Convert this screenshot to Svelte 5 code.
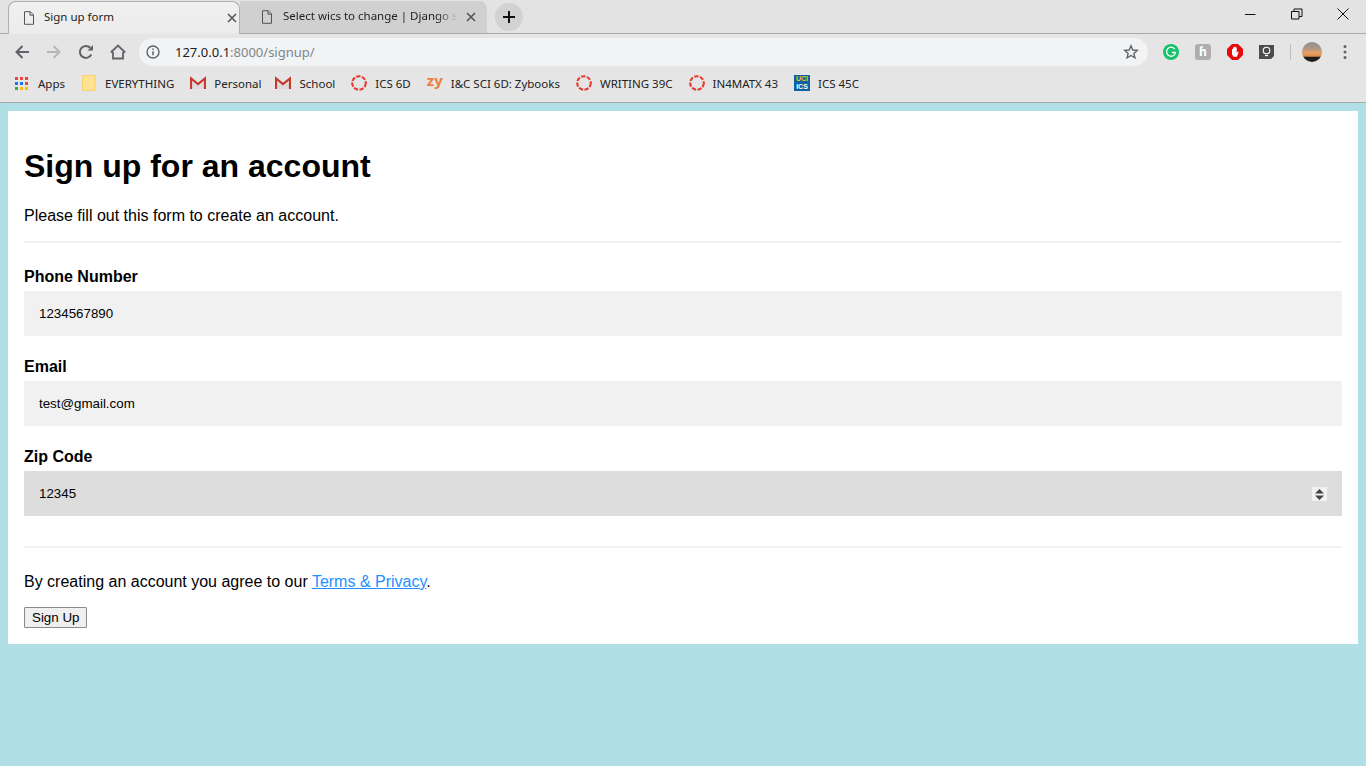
<script lang="ts">
const bookmarks = [
	{ icon: "apps", label: "Apps" },
	{ icon: "folder", label: "EVERYTHING" },
	{ icon: "gmail", label: "Personal" },
	{ icon: "gmail", label: "School" },
	{ icon: "ring", label: "ICS 6D" },
	{ icon: "zy", label: "I&C SCI 6D: Zybooks" },
	{ icon: "ring", label: "WRITING 39C" },
	{ icon: "ring", label: "IN4MATX 43" },
	{ icon: "uci", label: "ICS 45C" },
];
const appColors = ["#e8453c", "#e8453c", "#e8453c", "#1a73e8", "#1a73e8", "#e8453c", "#34a853", "#fbbc05", "#fbbc05"];
const fields = [
	{ label: "Phone Number", value: "1234567890" },
	{ label: "Email", value: "test@gmail.com" },
];
</script>

<div class="chrome">
	<div class="tabstrip">
		<div class="tab active">
			<svg class="page" viewBox="0 0 12 14" width="12" height="14"><path d="M1.500.700h5.800l3.200 3.200v9.400h-9zM7 .900v3.300h3.400" fill="none" stroke="#555" stroke-width="1"/></svg>
			<span class="tab-title">Sign up form</span>
			<svg class="tab-x" viewBox="0 0 10 10" width="10" height="10"><path d="M1 1l8 8M9 1l-8 8" stroke="#555" stroke-width="1.600"/></svg>
		</div>
		<div class="tab inactive">
			<svg class="page" viewBox="0 0 12 14" width="12" height="14"><path d="M1.500.700h5.800l3.200 3.200v9.400h-9zM7 .900v3.300h3.400" fill="none" stroke="#555" stroke-width="1"/></svg>
			<span class="tab-title fade">Select wics to change | Django site admin</span>
			<svg class="tab-x" viewBox="0 0 10 10" width="10" height="10"><path d="M1 1l8 8M9 1l-8 8" stroke="#555" stroke-width="1.600"/></svg>
		</div>
		<div class="newtab">
			<svg viewBox="0 0 12 12" width="12" height="12"><path d="M6 0v12M0 6h12" stroke="#111" stroke-width="2"/></svg>
		</div>
		<div class="window-controls">
			<svg viewBox="0 0 12 12" width="12" height="12"><path d="M0 6.500h10.500" stroke="#111" stroke-width="1"/></svg>
			<svg viewBox="0 0 12 12" width="12" height="12"><path d="M.500 3.500h7.500v7.500H.500zM3 3.500V1h8v7.500H8" fill="none" stroke="#111" stroke-width="1"/></svg>
			<svg viewBox="0 0 12 12" width="12" height="12"><path d="M.500.500l11 11M11.500.500l-11 11" stroke="#111" stroke-width="1"/></svg>
		</div>
	</div>

	<div class="toolbar">
		<div class="nav">
			<svg viewBox="0 0 16 16" width="16" height="16"><path d="M15 8H2.500M8.500 2L2.500 8l6 6" fill="none" stroke="#5f6368" stroke-width="2"/></svg>
			<svg viewBox="0 0 16 16" width="16" height="16"><path d="M1 8h12.500M7.500 2l6 6-6 6" fill="none" stroke="#b4b6b8" stroke-width="2"/></svg>
			<svg viewBox="0 0 16 16" width="16" height="16"><path d="M13.300 10.500A6 6 0 1 1 12.300 3.800" fill="none" stroke="#5f6368" stroke-width="2"/><path d="M9.500 6.500h5.500V1z" fill="#5f6368"/></svg>
			<svg viewBox="0 0 16 16" width="16" height="16"><path d="M3 8v6.500h10V8M.800 8.500L8 1.500l7.200 7" fill="none" stroke="#5f6368" stroke-width="1.800"/></svg>
		</div>
		<div class="omnibox">
			<svg class="info" viewBox="0 0 14 14" width="14" height="14"><circle cx="7" cy="7" r="6" fill="none" stroke="#5f6368" stroke-width="1.400"/><path d="M7 6.200v4M7 3.500v1.400" stroke="#5f6368" stroke-width="1.500"/></svg>
			<span class="url"><span class="host">127.0.0.1</span>:8000/signup/</span>
			<svg class="star" viewBox="0 0 16 16" width="16" height="16"><path d="M8 1.800l1.800 4.200 4.500.4-3.400 3 1 4.400L8 11.500l-3.900 2.300 1-4.400-3.400-3 4.500-.4z" fill="none" stroke="#5f6368" stroke-width="1.400"/></svg>
		</div>
		<div class="extensions">
			<svg viewBox="0 0 16 16" width="16" height="16"><circle cx="8" cy="8" r="8" fill="#15c26b"/><path d="M11.800 5.200A4.500 4.500 0 1 0 12.500 8.500H8.800" fill="none" stroke="#fff" stroke-width="1.300"/></svg>
			<div class="ext-hn">ɦ</div>
			<svg viewBox="0 0 16 16" width="16" height="16"><path d="M5 0h6l5 5v6l-5 5H5l-5-5V5z" fill="#e60a0a"/><path d="M5 8V5h1v2-3.500h1.200V7 2.800h1.300V7 3.500h1.200V9l1-1.500 1 .6L10 12.800H6.500L5 10.500z" fill="#fff"/></svg>
			<svg viewBox="0 0 16 16" width="16" height="16"><path d="M0 1h15v11l-3 3H0z" fill="#4c4c4c"/><circle cx="7.500" cy="6.500" r="3.300" fill="none" stroke="#fff" stroke-width="1.100"/><path d="M6 11.500h3" stroke="#fff" stroke-width="1.300"/></svg>
			<div class="divider"></div>
			<div class="avatar"></div>
			<svg class="kebab" viewBox="0 0 4 16" width="4" height="16"><circle cx="2" cy="2.500" r="1.500" fill="#5f6368"/><circle cx="2" cy="8" r="1.500" fill="#5f6368"/><circle cx="2" cy="13.500" r="1.500" fill="#5f6368"/></svg>
		</div>
	</div>

	<div class="bookmarks">
		{#each bookmarks as mark}
			<div class="mark">
				{#if mark.icon === "apps"}
					<div class="apps">
						{#each appColors as color}<i style="background: {color}"></i>{/each}
					</div>
				{:else if mark.icon === "folder"}
					<svg viewBox="0 0 14 16" width="14" height="16"><path d="M.500.500h12.500v15H.500z" fill="#fde293" stroke="#f6d26b"/></svg>
				{:else if mark.icon === "gmail"}
					<svg viewBox="0 0 16 14" width="16" height="14"><path d="M1 3l7 5.500L15 3v10H1z" fill="#dcdcdc"/><path d="M1 13V2.500L8 8l7-5.500V13" fill="none" stroke="#c8382b" stroke-width="2.200"/></svg>
				{:else if mark.icon === "ring"}
					<svg viewBox="0 0 16 16" width="16" height="16"><circle cx="8" cy="8" r="6.800" fill="none" stroke="#e8392e" stroke-width="2.100" stroke-dasharray="4.300 1.500"/></svg>
				{:else if mark.icon === "zy"}
					<span class="zy">zy</span>
				{:else}
					<div class="uci"><span class="uci-top">UCI</span><span>ICS</span></div>
				{/if}
				<span>{mark.label}</span>
			</div>
		{/each}
	</div>
</div>

<main class="card">
	<h1>Sign up for an account</h1>
	<p class="intro">Please fill out this form to create an account.</p>
	<hr />
	{#each fields as field}
		<label class="field">
			<b>{field.label}</b>
			<input type="text" value={field.value} />
		</label>
	{/each}
	<label class="field">
		<b>Zip Code</b>
		<div class="zip">
			<input class="focused" type="text" value="12345" />
			<span class="spinner">
				<svg viewBox="0 0 9 11" width="9" height="11"><path d="M4.500 0L9 4.500H0zM0 6.500h9L4.500 11z" fill="#444"/></svg>
			</span>
		</div>
	</label>
	<hr class="lower" />
	<p class="terms">By creating an account you agree to our <a href="#terms">Terms &amp; Privacy</a>.</p>
	<button type="button">Sign Up</button>
</main>

<style>
	:global(body) {
		background: #b0dfe5;
		font-family: "Liberation Sans", Arial, sans-serif;
	}

	.chrome {
		display: flex;
		flex-direction: column;
		height: 102px;
		border-bottom: 1px solid #a9a9a9;
		background: #e5e5e5;
		font-family: "Noto Sans", "Open Sans", sans-serif;
		font-size: 11.5px;
		color: #222;
	}

	.tabstrip {
		display: flex;
		align-items: flex-end;
		height: 34px;
		padding-left: 8px;
		box-sizing: border-box;
		border-bottom: 1px solid #a9a9a9;
		background: #e3e3e3;
	}

	.tab {
		display: flex;
		align-items: center;
		height: 33px;
		box-sizing: border-box;
		border-radius: 8px 8px 0 0;
		margin-bottom: -1px;
	}

	.tab.active {
		width: 232px;
		padding: 0 2px 1px 14px;
		border: 1px solid #b0b0b0;
		border-bottom: 0;
		background: linear-gradient(#f1f1f1, #ebebeb);
	}

	.tab.inactive {
		width: 247px;
		padding: 0 11px 1px 21px;
		margin-bottom: 0;
		height: 32px;
		background: #d0d0d0;
		border-radius: 0 8px 0 0;
	}

	.page {
		flex: none;
		margin-right: 9px;
	}

	.inactive .page {
		margin-right: 10px;
	}

	.tab-title {
		flex: 1;
		min-width: 0;
		padding-bottom: 2px;
		overflow: hidden;
		white-space: nowrap;
	}

	.fade {
		-webkit-mask-image: linear-gradient(90deg, #000 88%, transparent);
		mask-image: linear-gradient(90deg, #000 88%, transparent);
	}

	.tab-x {
		flex: none;
		margin-left: 8px;
	}

	.newtab {
		display: flex;
		align-items: center;
		justify-content: center;
		width: 28px;
		height: 28px;
		margin: 0 0 2px 8px;
		border-radius: 50%;
		background: #d2d2d2;
	}

	.window-controls {
		display: flex;
		gap: 34px;
		margin-left: auto;
		align-self: flex-start;
		padding: 8px 17px 0 0;
	}

	.toolbar {
		display: flex;
		align-items: center;
		height: 34px;
		box-sizing: border-box;
		padding: 2px 0 0 14px;
	}

	.nav {
		display: flex;
		gap: 16px;
	}

	.omnibox {
		display: flex;
		align-items: center;
		width: 1009px;
		height: 28px;
		box-sizing: border-box;
		margin-left: 13px;
		padding: 0 9px 0 7px;
		border-radius: 14px;
		background: #f1f3f4;
	}

	.url {
		flex: 1;
		margin-left: 15px;
		font-size: 13px;
		color: #80868b;
	}

	.host {
		color: #202124;
	}

	.extensions {
		display: flex;
		align-items: center;
		margin-left: 15px;
		gap: 16px;
	}

	.ext-hn {
		display: flex;
		align-items: center;
		justify-content: center;
		width: 16px;
		height: 16px;
		border-radius: 3px;
		background: #aeaeae;
		color: #fff;
		font-size: 12px;
		font-weight: 700;
		line-height: 1;
	}

	.divider {
		width: 1px;
		height: 16px;
		margin: 0 -5px 0 -1px;
		background: #bcbcbc;
	}

	.avatar {
		width: 20px;
		height: 20px;
		border-radius: 50%;
		background: linear-gradient(#8f8f8f 0, #a8958a 30%, #e8a25f 55%, #d98846 72%, #1d1a18 74%, #26221f 100%);
	}

	.kebab {
		margin-left: 5px;
	}

	.bookmarks {
		display: flex;
		align-items: center;
		gap: 16px;
		height: 32px;
		box-sizing: border-box;
		padding: 0 0 2px 14px;
	}

	.mark {
		display: flex;
		align-items: center;
		gap: 8px;
		white-space: nowrap;
	}

	.mark:nth-child(2) {
		margin-left: 1px;
		gap: 9px;
	}

	.mark:nth-child(3) {
		margin-right: -2px;
	}

	.apps {
		display: grid;
		grid-template-columns: repeat(3, 3px);
		gap: 2px;
		width: 16px;
		padding: 0 1px;
		box-sizing: border-box;
	}

	.apps i {
		width: 3px;
		height: 3px;
	}

	.zy {
		width: 16px;
		margin-top: -5px;
		color: #ef7d3a;
		font-size: 15px;
		font-weight: 700;
		line-height: 1;
	}

	.uci {
		display: flex;
		flex-direction: column;
		align-items: center;
		width: 16px;
		height: 16px;
		background: #0b639f;
		color: #fff;
		font: 700 7px/8px "Liberation Sans", sans-serif;
	}

	.uci-top {
		color: #f5c518;
	}

	.card {
		margin: 8px;
		padding: 16px;
		background: #fff;
		color: #000;
		font-size: 16px;
	}

	h1 {
		margin: 21px 0 22px;
		font-size: 32px;
		line-height: 37px;
	}

	.intro {
		margin: 0 0 16px;
	}

	hr {
		height: 0;
		margin: 0 0 25px;
		border: 1px solid #f1f1f1;
	}

	.field {
		display: block;
	}

	.field b {
		display: block;
		line-height: 18px;
	}

	input {
		display: block;
		width: 100%;
		box-sizing: border-box;
		margin: 5px 0 22px;
		padding: 15px;
		border: none;
		outline: none;
		background: #f1f1f1;
		font-family: "Liberation Sans", Arial, sans-serif;
		font-size: 13.333px;
		line-height: 15px;
		color: #000;
	}

	input.focused {
		background: #ddd;
	}

	.zip {
		position: relative;
	}

	.spinner {
		position: absolute;
		top: 16px;
		right: 15px;
		display: flex;
		align-items: center;
		justify-content: center;
		width: 15px;
		height: 14px;
		background: #f1f1f1;
	}

	hr.lower {
		margin-top: 30px;
	}

	.terms {
		margin: 0 0 16px;
	}

	a {
		color: dodgerblue;
	}

	button {
		display: block;
		height: 21px;
		padding: 1px 7px;
		border: 1px solid #8a8a8a;
		border-radius: 1px;
		background: #efefef;
		color: #000;
		font-family: "Liberation Sans", Arial, sans-serif;
		font-size: 13.333px;
	}
</style>
